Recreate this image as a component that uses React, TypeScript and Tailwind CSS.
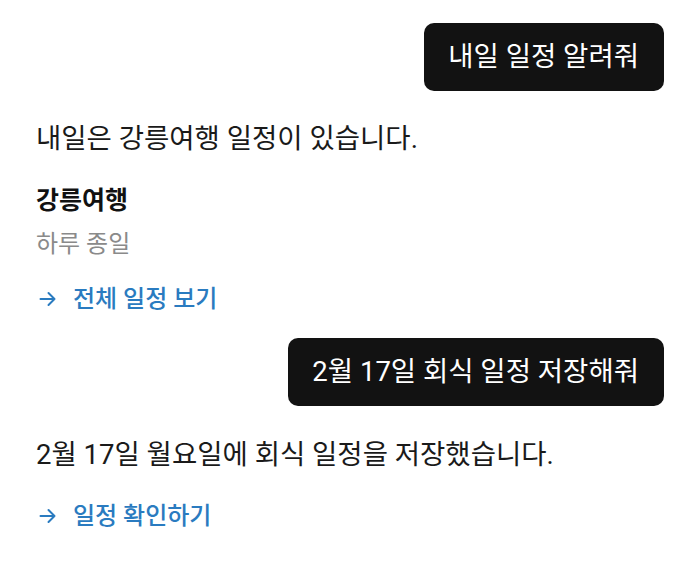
import React from 'react';

const ArrowRight = () => (
  <svg width="18" height="16" viewBox="0 0 18 16" fill="none" className="shrink-0">
    <path d="M1.5 8h14M9.5 2l6 6-6 6" stroke="#2a7bc0" strokeWidth="2" strokeLinecap="round" strokeLinejoin="round" />
  </svg>
);

const UserBubble = ({ text, className = '' }: { text: string; className?: string }) => (
  <div className={`flex justify-end ${className}`}>
    <div className="bg-[#121212] text-white rounded-[10px] pl-6 pr-[25px] py-4 leading-9 text-[27.5px]">{text}</div>
  </div>
);

const LinkRow = ({ label, className = '' }: { label: string; className?: string }) => (
  <div className={`flex items-center leading-9 text-[24px] text-[#2a7bc0] font-medium ${className}`}>
    <span className="w-[37px] pl-[3px] flex items-center">
      <ArrowRight />
    </span>
    <span>{label}</span>
  </div>
);

export default function App() {
  return (
    <div className="w-[700px] h-[561px] bg-white px-9 pt-[23px] text-[#1a1a1a] font-['Roboto','Noto_Sans_CJK_KR',sans-serif] overflow-hidden">
      <UserBubble text="내일 일정 알려줘" />

      <p className="mt-[30px] leading-9 text-[27.5px]">내일은 강릉여행 일정이 있습니다.</p>

      <div className="mt-[26px]">
        <p className="leading-9 text-[25px] font-semibold text-[#111]">강릉여행</p>
        <p className="mt-[7px] leading-9 text-[24px] text-[#8a8a8a]">하루 종일</p>
      </div>

      <LinkRow label="전체 일정 보기" className="mt-[19px]" />

      <UserBubble text="2월 17일 회식 일정 저장해줘" className="mt-[21px]" />

      <p className="mt-[31px] leading-9 text-[27.5px]">2월 17일 월요일에 회식 일정을 저장했습니다.</p>

      <LinkRow label="일정 확인하기" className="mt-[25px]" />
    </div>
  );
}
